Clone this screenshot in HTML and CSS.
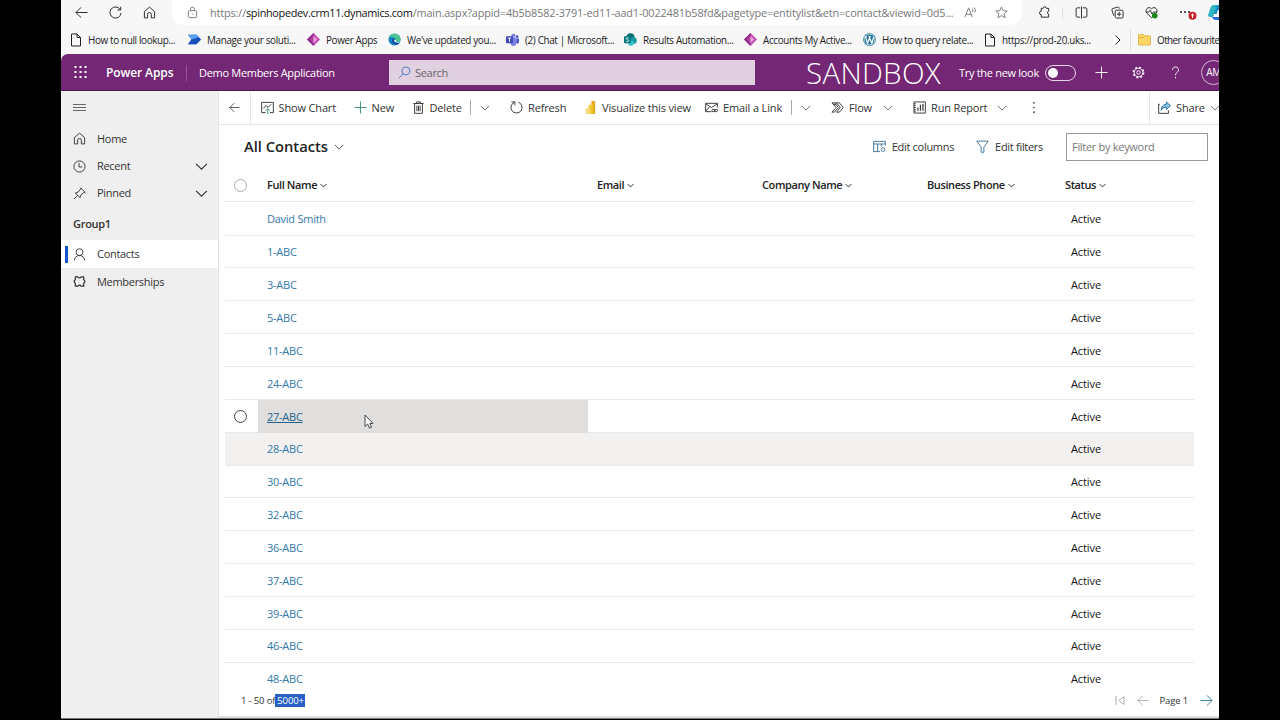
FILE: index.html
```
<!DOCTYPE html>
<html lang="en">
  <head>
    <meta charset="UTF-8" />
    <meta name="viewport" content="width=device-width, initial-scale=1.0" />
    <title>All Contacts - Power Apps</title>
    <link rel="stylesheet" href="styles.css">
  </head>
  <body>
    <!-- Shared icons -->
    <svg class="sprite">
      <symbol id="chevron" viewBox="0 0 12 12"><path d="M1 3.5l5 5 5-5" /></symbol>
      <symbol id="arrow" viewBox="0 0 14 14"><path d="M13.5 7H1M6.5 1.5L1 7l5.5 5.5" /></symbol>
      <symbol id="page" viewBox="0 0 12 14"><path d="M1.5 1h5.5l3.5 3.5V13h-9zM7 1v3.5h3.5" /></symbol>
      <symbol id="home" viewBox="0 0 14 14"><path d="M1.5 6L7 1.2 12.5 6v6.8H9V9a2 2 0 0 0-4 0v3.8H1.5z" /></symbol>
      <symbol id="powerapps" viewBox="0 0 14 14">
        <path d="M7 0l7 7-7 7-7-7z" fill="#c54bb0" />
        <path d="M7 0L0 7l7 7z" fill="#8b2a86" />
        <path d="M7 3l4 4-4 4-3-4z" fill="#e9a3dc" />
        <path d="M7 3L3 7l4 4z" fill="#b5459f" />
      </symbol>
    </svg>

    <div class="window">
      <div class="address-bar">
        <svg class="icon"><use href="#arrow" /></svg>
        <svg class="icon" viewBox="0 0 14 14"><path d="M12.2 4A6 6 0 1 0 13 7.6M12.6.8V4.3H9" /></svg>
        <svg class="icon"><use href="#home" /></svg>
        <div class="address">
          <svg class="icon lock" viewBox="0 0 12 14"><rect x="1.5" y="5" width="9" height="7.5" rx="1.2" /><path d="M3.8 5V3.5a2.2 2.2 0 0 1 4.4 0V5M6 8.3v1" /></svg>
          <span class="url">https://<b>spinhopedev.crm11.dynamics.com</b>/main.aspx?appid=4b5b8582-3791-ed11-aad1-0022481b58fd&amp;pagetype=entitylist&amp;etn=contact&amp;viewid=0d5...</span>
          <svg class="icon read" viewBox="0 0 14 14"><path d="M1 12L5 2l4 10M2.3 9h5.4M9 3q1.5 1.5 0 3.500M11 1.500q2.500 2.500.5 5.500" /></svg>
          <svg class="icon" viewBox="0 0 14 14"><path d="M7 1l1.800 4 4.300.4-3.200 2.900 1 4.300L7 10.400l-3.900 2.200 1-4.300L.9 5.400 5.200 5z" /></svg>
        </div>
        <svg class="icon" viewBox="0 0 14 14"><path d="M5.500 2.500a1.700 1.700 0 0 1 3.400 0h2.600v3a1.700 1.700 0 0 0 0 3.300v3.200H3.500V9.300a1.900 1.900 0 1 1 0-3.800v-3z" /></svg>
        <span class="separator"></span>
        <svg class="icon" viewBox="0 0 14 14"><path d="M5.500 2H2.500A1.300 1.300 0 0 0 1.200 3.300v7.400A1.300 1.300 0 0 0 2.500 12h3M8.500 2h3a1.300 1.300 0 0 1 1.300 1.300v7.400a1.300 1.300 0 0 1-1.300 1.300h-3M7 .5v13" /></svg>
        <svg class="icon" viewBox="0 0 14 14"><rect x="4.500" y="4.500" width="8.500" height="8.500" rx="1.500" /><path d="M8.750 6.500v4.500M6.500 8.750H11M3 10.500L1 4.500A1.500 1.500 0 0 1 2 2.700l5-1.500a1.500 1.500 0 0 1 1.800.8l.3.900" /></svg>
        <svg class="icon" viewBox="0 0 14 14"><path d="M7 12.500L1.800 7.500C-.5 4 3.500-.5 7 3c3.500-3.500 7.500 1 5.200 4.500zM1 6.500h3l1.500-2 2 4 1.500-2h4" /><circle class="ok" cx="10.500" cy="10.500" r="3" /></svg>
        <svg class="icon more" viewBox="0 0 18 14"><circle cx="2" cy="6" r="1" /><circle cx="6" cy="6" r="1" /><circle cx="10" cy="6" r="1" /><circle class="alert" cx="13.500" cy="9.800" r="4" /><path d="M13.500 12V8M12 9.400L13.500 8 15 9.400" /></svg>
        <svg class="copilot" viewBox="0 0 14 18"><path d="M6 1h8v9H4z" fill="#1b8fc4" /><path d="M6 1Q3 1 2 5L0 11q0 2 3 2h2L9 1z" fill="#2fb6c5" /><path d="M4 13h9l-1 3H8q-3 0-4-3z" fill="#2868d8" /><path d="M10 6h4v6H8z" fill="#f7f7f7" /></svg>
      </div>

      <div class="bookmarks">
        <a><svg class="icon page"><use href="#page" /></svg>How to null lookup...</a>
        <a><svg viewBox="0 0 14 14"><path d="M0 2h9l5 5-5 5H0l4-5z" fill="#2f6fdc" /><path d="M7 2h2l5 5-5 5H0z" fill="#1b4fb8" /><path d="M0 2h9l2.500 2.500L4 7z" fill="#58a1f5" /></svg>Manage your soluti...</a>
        <a><svg><use href="#powerapps" /></svg>Power Apps</a>
        <a><svg viewBox="0 0 14 14"><circle cx="7" cy="7" r="6.500" fill="#1685c8" /><path d="M1 5a6.500 6.500 0 0 1 12.500 2c0 3-4 3-5 1.500 1-4-5-5-7.500-3.500z" fill="#4cc68b" /><path d="M6 6c-3 1-2 6 3 6.500 2 0 3-1 3.500-2C9 11 5.500 9.500 7 6.500z" fill="#0f4a91" /><path d="M6.700 7.300c-.8 2 2 3.700 5.300 2.800l.8-.7C10 10 7.500 9 8.500 7.500z" fill="#fff" /></svg>We've updated you...</a>
        <a><svg viewBox="0 0 14 14"><circle cx="8" cy="3" r="2.300" fill="#7b83eb" /><circle cx="12" cy="4" r="1.500" fill="#5059c9" /><path d="M5 5.500h6v5a3 3 0 0 1-6 1z" fill="#7b83eb" /><path d="M11 6h3v4a2 2 0 0 1-3 1z" fill="#5059c9" /><rect y="3.500" width="7.500" height="7.500" rx=".8" fill="#4049b3" /><path d="M2 5.500h3.600M3.800 5.500v4" stroke="#fff" /></svg>(2) Chat | Microsoft...</a>
        <a><svg viewBox="0 0 14 14"><circle cx="7" cy="4.500" r="4.300" fill="#036c70" /><circle cx="10" cy="8" r="3.800" fill="#1a9ba1" /><circle cx="7.500" cy="11" r="2.800" fill="#37c6d0" /><rect y="3.500" width="7.500" height="7.500" rx=".8" fill="#03787c" /><path d="M5 5.500c-3-1-3.200 1.200-1.200 1.700S5.500 9.800 2.500 9" fill="none" stroke="#fff" /></svg>Results Automation...</a>
        <a><svg><use href="#powerapps" /></svg>Accounts My Active...</a>
        <a><svg viewBox="0 0 14 14"><circle cx="7" cy="7" r="6.800" fill="#21759b" /><circle cx="7" cy="7" r="5.700" fill="none" stroke="#d8e7ee" stroke-width=".8" /><path d="M2.500 4l2.600 7L7 5l2.500 6 2-6.500M2 4h2M6 4h2.500" fill="none" stroke="#fff" stroke-width="1.300" /></svg>How to query relate...</a>
        <a><svg class="icon page"><use href="#page" /></svg>https://prod-20.uks...</a>
        <svg class="icon next" viewBox="0 0 8 12"><path d="M1.500 1.500L6 6l-4.500 4.500" /></svg>
        <a class="folder"><svg viewBox="0 0 14 14"><path d="M.5 2.500q0-1 1-1h4l1.500 1.500h5.500q1 0 1 1v8q0 1-1 1h-11q-1 0-1-1z" fill="#ffd767" stroke="#d8a432" stroke-width=".8" /><path d="M.5 5h5L7 3.500" fill="none" stroke="#d8a432" stroke-width=".8" /></svg>Other favourite</a>
      </div>

      <header class="app-header">
        <svg class="waffle" viewBox="0 0 13 13"><path d="M1.500 0v13M6.500 0v13M11.500 0v13" /></svg>
        <span class="brand">Power Apps</span>
        <span class="app-name">Demo Members Application</span>
        <div class="search"><svg class="icon" viewBox="0 0 14 14"><circle cx="8.500" cy="5.300" r="4.300" /><path d="M5.500 8.500L1 13" /></svg>Search</div>
        <span class="sandbox">SANDBOX</span>
        <span class="new-look">Try the new look</span>
        <span class="toggle"></span>
        <svg class="icon" viewBox="0 0 14 14"><path d="M7 .5v13M.5 7h13" /></svg>
        <svg class="icon gear" viewBox="0 0 14 14"><circle cx="7" cy="7" r="4.600" /><circle cx="7" cy="7" r="1.900" /><circle class="teeth" cx="7" cy="7" r="5.600" /></svg>
        <svg class="icon help" viewBox="0 0 14 14"><path d="M3.800 4.200a3.200 3.200 0 1 1 5 2.600Q7 8 7 10M7 11.800v1.400" /></svg>
        <span class="avatar">AM</span>
      </header>

      <div class="workspace">
        <nav class="sidebar">
          <svg class="icon menu" viewBox="0 0 13 13"><path d="M0 3.500h13M0 6.500h13M0 9.500h13" /></svg>
          <a><svg class="icon"><use href="#home" /></svg>Home</a>
          <a><svg class="icon" viewBox="0 0 14 14"><circle cx="7" cy="7" r="6" /><path d="M6.500 3v4.500H10" /></svg>Recent<svg class="icon expand"><use href="#chevron" /></svg></a>
          <a><svg class="icon" viewBox="0 0 14 14"><path d="M1 13l4-4M2.500 6.500l5 5 1-3 3-2.500 1.500-.3L8.300 1 8 2.500 5.500 5.500z" /></svg>Pinned<svg class="icon expand"><use href="#chevron" /></svg></a>
          <h2>Group1</h2>
          <a class="selected"><svg class="icon" viewBox="0 0 14 14"><circle cx="7" cy="4.500" r="3.700" /><path d="M1.500 13.500a5.500 5.500 0 0 1 11 0" /></svg>Contacts</a>
          <a><svg class="icon bold" viewBox="0 0 14 14"><path d="M2.500 2h2.700q1.800 2.400 3.600 0h2.700v3.200q2.600 1.800 0 3.600V12H8.800Q7 9.600 5.200 12H2.500V8.800q-2.600-1.800 0-3.600z" /></svg>Memberships</a>
        </nav>

        <main>
          <div class="commands">
            <span class="back"><svg class="icon"><use href="#arrow" /></svg></span>
            <span><svg class="icon" viewBox="0 0 14 14"><path d="M5 12.500H.7V1.500h12.600v11H9.500M2.500 8l3-3 2 2L11 3.500" /><path class="green" d="M7.300 14V8.500M5 10.500l2.300-2.300 2.300 2.300" /></svg>Show Chart</span>
            <span><svg class="icon green" viewBox="0 0 14 14"><path d="M7 .5v13M.5 7h13" /></svg>New</span>
            <span><svg class="icon trash" viewBox="0 0 14 14"><path d="M1.500 2.700h11M5 2.700V1h4v1.700M2.800 2.700v10.600h8.400V2.700M5.300 5v6M7 5v6M8.700 5v6" /></svg>Delete</span>
            <span class="split"><svg class="icon chevron"><use href="#chevron" /></svg></span>
            <span><svg class="icon" viewBox="0 0 14 14"><path d="M5 1.300a6 6 0 1 0 4 0M1.500 1h3.700v3.500" /></svg>Refresh</span>
            <span><svg viewBox="0 0 14 14"><path d="M8 0h4v14H8z" fill="#e3aa18" /><path d="M5 4h4.500v10H5z" fill="#f2c737" /><path d="M2 8h4.500v6H2z" fill="#f5d976" /></svg>Visualize this view</span>
            <span><svg class="icon" viewBox="0 0 14 14"><path d="M7 11.500H.7v-9h12.600V7M.7 3l6.300 4 6.300-4M.7 11L5 6" /><rect x="7.500" y="9" width="3.500" height="2.500" rx="1.200" /><rect x="10.500" y="9" width="3" height="2.500" rx="1.200" /></svg>Email a Link</span>
            <span class="split"><svg class="icon chevron"><use href="#chevron" /></svg></span>
            <span><svg class="icon" viewBox="0 0 14 14"><path d="M1 2h8l4.300 5L9 12H6l4-5-4-5M1 2l4.500 5L1 12h2.500L8 7 3.800 2M2.500 4h3" /></svg>Flow</span>
            <svg class="icon chevron"><use href="#chevron" /></svg>
            <span><svg class="icon" viewBox="0 0 14 14"><path d="M3.500 1h9.800v12H1V1h2.500M1 3h2M1 5h2M1 7h2M1 9h2M1 11h2" /><path class="bold" d="M5.300 10.500V7M8 10.500V4M10.700 10.500V3" /></svg>Run Report</span>
            <svg class="icon chevron"><use href="#chevron" /></svg>
            <svg class="dots" viewBox="0 0 4 14"><circle cx="2" cy="2" r=".9" /><circle cx="2" cy="7" r=".9" /><circle cx="2" cy="12" r=".9" /></svg>
            <span class="share"><svg class="icon" viewBox="0 0 14 14"><path d="M2 3.500H.7v9.800h10.500V10" /><path d="M9 1l4.500 4L9 9V6.500Q5 6.300 3.500 10q0-6 5.500-6.500z" fill="#8ac3e8" stroke="#276fa5" /></svg>Share</span>
            <svg class="icon chevron"><use href="#chevron" /></svg>
          </div>

          <div class="view-bar">
            <h1>All Contacts</h1>
            <svg class="icon title-chevron"><use href="#chevron" /></svg>
            <span class="columns"><svg class="icon blue" viewBox="0 0 14 14"><path d="M7.500 12.500H.7v-11h12.600V6M.7 4.300h12.600M5 4.300v8.200M9 4.300V7" /><circle cx="10.800" cy="10.300" r="2" /></svg>Edit columns</span>
            <span><svg class="icon blue" viewBox="0 0 14 14"><path d="M.8 1.200h12.400L8.500 7.500v5.700h-3V7.500z" /></svg>Edit filters</span>
            <input class="filter" type="text" placeholder="Filter by keyword">
          </div>

          <div class="grid">
            <div class="row head">
              <i class="radio"></i>
              <span>Full Name<svg class="icon"><use href="#chevron" /></svg></span>
              <span>Email<svg class="icon"><use href="#chevron" /></svg></span>
              <span>Company Name<svg class="icon"><use href="#chevron" /></svg></span>
              <span>Business Phone<svg class="icon"><use href="#chevron" /></svg></span>
              <span>Status<svg class="icon"><use href="#chevron" /></svg></span>
            </div>
            <div class="row first"><a>David Smith</a><span class="status">Active</span></div>
            <div class="row"><a>1-ABC</a><span class="status">Active</span></div>
            <div class="row"><a>3-ABC</a><span class="status">Active</span></div>
            <div class="row"><a>5-ABC</a><span class="status">Active</span></div>
            <div class="row"><a>11-ABC</a><span class="status">Active</span></div>
            <div class="row"><a>24-ABC</a><span class="status">Active</span></div>
            <div class="row current">
              <i class="radio"></i><a>27-ABC</a><span class="status">Active</span>
              <svg class="cursor" viewBox="0 0 10 15"><path d="M1 1v11.500l2.700-2.400 1.800 4 2-.9-1.700-3.800H9z" /></svg>
            </div>
            <div class="row shaded"><a>28-ABC</a><span class="status">Active</span></div>
            <div class="row"><a>30-ABC</a><span class="status">Active</span></div>
            <div class="row"><a>32-ABC</a><span class="status">Active</span></div>
            <div class="row"><a>36-ABC</a><span class="status">Active</span></div>
            <div class="row"><a>37-ABC</a><span class="status">Active</span></div>
            <div class="row"><a>39-ABC</a><span class="status">Active</span></div>
            <div class="row"><a>46-ABC</a><span class="status">Active</span></div>
            <div class="row"><a>48-ABC</a><span class="status">Active</span></div>
          </div>

          <footer>
            <span class="count">1 - 50 of<mark>5000+</mark></span>
            <svg class="icon muted" viewBox="0 0 12 12"><path d="M2 1.500v9M10 2v8L5 6z" /></svg>
            <svg class="icon muted"><use href="#arrow" /></svg>
            <span class="page-number">Page 1</span>
            <svg class="icon forward"><use href="#arrow" /></svg>
          </footer>
        </main>
      </div>
    </div>
  </body>
</html>
```
FILE: styles.css
```
* {
  box-sizing: border-box;
}

body {
  margin: 0;
  height: 720px;
  padding: 0 61px;
  overflow: hidden;
  background: #000;
  color: #333;
  font: 11px/16px "Open Sans", "Noto Sans", sans-serif;
  letter-spacing: -0.3px;
  white-space: nowrap;
}

svg {
  display: block;
  flex: none;
  width: 13px;
  height: 13px;
}

.sprite {
  display: none;
}

.icon {
  fill: none;
  stroke: currentColor;
  stroke-width: 1;
}

.bold {
  stroke-width: 1.3;
}

.window {
  display: flex;
  flex-direction: column;
  width: 1158px;
  height: 719px;
  overflow: hidden;
  background: #f7f7f7;
  border-bottom: 1px solid #777;
}

/* Browser chrome */
.address-bar {
  display: grid;
  grid-template-columns: 34px 34px 38px 857px 24px 13px 36px 34px 34px 29px 20px;
  align-items: center;
  height: 25px;
  padding-left: 14px;
  color: #222;
}

.address {
  display: flex;
  align-items: center;
  width: 850px;
  height: 25px;
  margin-left: -9px;
  padding-left: 14px;
  background: #fff;
  border-radius: 0 0 12px 12px;
}

.address .icon {
  color: #777;
}

.url {
  width: 743px;
  margin: 0 11px;
  color: #777;
  font-size: 10.9px;
  letter-spacing: -0.145px;
}

.url b {
  color: #111;
  font-weight: 400;
  letter-spacing: -0.32px;
}

.address .read {
  margin-right: 18px;
}

.separator {
  width: 1px;
  height: 12px;
  background: #ddd;
}

.address-bar .ok {
  fill: #16831b;
  stroke: none;
}

.address-bar .more {
  width: 18px;
  height: 14px;
}

.more circle {
  fill: #222;
  stroke: none;
}

.more .alert {
  fill: #c9252d;
}

.more path {
  stroke: #fff;
}

.copilot {
  width: 14px;
  height: 18px;
}

.bookmarks {
  display: grid;
  grid-template-columns: 118px 119px 81px 118px 118px 120px 119px 121px 130px 16px 90px;
  align-items: center;
  height: 29px;
  padding-left: 9px;
  color: #222;
  font-size: 9.9px;
  letter-spacing: -0.35px;
}

.bookmarks a {
  display: flex;
  align-items: center;
  gap: 6px;
}

.bookmarks .page {
  width: 12px;
  height: 14px;
}

.bookmarks .next {
  width: 8px;
  height: 12px;
}

.bookmarks .folder {
  height: 20px;
  padding-left: 7px;
  border-left: 1px solid #ddd;
  letter-spacing: -0.55px;
}

/* Purple app header */
.app-header {
  display: flex;
  align-items: center;
  height: 37px;
  padding: 1px 0 0 13px;
  background: #742774;
  border-bottom: 1px solid #4b164b;
  border-radius: 7px 0 0 0;
  color: #fff;
}

.app-header > * {
  flex: none;
}

.waffle {
  fill: none;
  stroke: #fff;
  stroke-width: 2;
  stroke-dasharray: 2 3;
}

.brand {
  width: 81px;
  margin-left: 19px;
  border-right: 1px solid #935793;
  font-size: 12px;
  font-weight: 600;
  letter-spacing: -0.1px;
}

.app-name {
  width: 202px;
  padding-left: 12px;
}

.search {
  display: flex;
  align-items: center;
  gap: 4px;
  width: 366px;
  height: 25px;
  padding-left: 9px;
  background: #e0d0e0;
  color: #666;
}

.search .icon {
  color: #4878c8;
}

.sandbox {
  width: 153px;
  margin-left: 51px;
  font-size: 29.5px;
  font-weight: 300;
  line-height: 35px;
  letter-spacing: 0.3px;
}

.new-look {
  width: 86px;
}

.toggle {
  display: flex;
  align-items: center;
  width: 31px;
  height: 16px;
  margin-right: 19px;
  padding-left: 2px;
  border: 1px solid #e5d5e5;
  border-radius: 8px;
}

.toggle::before {
  content: "";
  width: 10px;
  height: 10px;
  background: #fff;
  border-radius: 50%;
}

.gear {
  margin-left: 24px;
}

.gear .teeth {
  stroke-width: 1.5;
  stroke-dasharray: 2.2 2.2;
}

.help {
  margin: 0 19px 0 24px;
}

.avatar {
  width: 25px;
  height: 25px;
  border: 1px solid #d5b8d5;
  border-radius: 50%;
  font-size: 10px;
  line-height: 23px;
  text-align: center;
}

.workspace {
  display: flex;
  flex: 1;
  min-height: 0;
}

/* Left navigation */
.sidebar {
  width: 158px;
  padding-top: 10px;
  background: #efefef;
  border-right: 1px solid #e2e2e2;
}

.sidebar .menu {
  margin: 0 0 11px 12px;
  color: #666;
}

.sidebar a {
  display: flex;
  align-items: center;
  gap: 11px;
  height: 27.4px;
  padding-left: 12px;
}

.sidebar .expand {
  margin: 0 10px 0 auto;
}

.sidebar h2 {
  margin: 9px 0 9px 12px;
  font-size: 11px;
  font-weight: 600;
  line-height: 15px;
}

.sidebar .selected {
  position: relative;
  height: 28px;
  background: #fff;
}

.selected::before {
  content: "";
  position: absolute;
  left: 4px;
  width: 3px;
  height: 17px;
  background: #1155cc;
}

/* Content area */
main {
  display: flex;
  flex: 1;
  flex-direction: column;
  min-width: 0;
  background: #fff;
}

.commands {
  display: grid;
  grid-template-columns: 41.5px 93px 59px 57.5px 40px 74px 121px 86px 40px 52px 30px 84px 35px 117px 61px 14px;
  align-items: center;
  height: 34px;
  border-bottom: 1px solid #e6e6e6;
  letter-spacing: -0.15px;
}

.commands span {
  display: flex;
  align-items: center;
  gap: 5px;
}

.commands .back {
  width: 32px;
  height: 33px;
  padding-left: 10px;
  border-right: 1px solid #e6e6e6;
}

.back .icon {
  width: 11px;
  height: 11px;
}

.trash {
  margin-left: -1px;
}

.green {
  stroke: #3c8c6c;
}

.commands .split {
  height: 15px;
  padding-left: 9px;
  border-left: 1px solid #aaa;
}

.chevron {
  width: 10px;
  height: 10px;
  color: #555;
}

.commands .dots {
  width: 4px;
  fill: #333;
}

.commands .share {
  height: 33px;
  padding-left: 8px;
  border-left: 1px solid #e6e6e6;
}

.view-bar {
  display: flex;
  align-items: center;
  height: 43px;
  padding-left: 25px;
}

.view-bar h1 {
  margin: 0;
  padding-bottom: 2px;
  color: #222;
  font-size: 14.7px;
  font-weight: 600;
  letter-spacing: 0;
}

.title-chevron {
  width: 10px;
  height: 10px;
  margin-left: 6px;
}

.view-bar span {
  display: flex;
  gap: 6px;
  align-items: center;
}

.view-bar .columns {
  margin: 0 22px 0 auto;
}

.blue {
  stroke: #3b7099;
}

.filter {
  width: 142px;
  height: 28px;
  margin: 0 11px 0 23px;
  padding: 0 5px;
  border: 1px solid #999;
  font: inherit;
  letter-spacing: inherit;
}

.filter::placeholder {
  color: #777;
}

/* Contact list */
.grid {
  height: 522px;
  padding-left: 6px;
  overflow: hidden;
}

.row {
  position: relative;
  display: grid;
  grid-template-columns: 33px 330px 165px 165px 138px 138px;
  align-items: center;
  width: 969px;
  height: 32.86px;
  padding-top: 1.4px;
  border-bottom: 1px solid #e9e9e9;
  color: #111;
}

.row a {
  grid-column: 2;
  padding-left: 9px;
  color: #337aa9;
  letter-spacing: -0.25px;
}

.status {
  grid-column: 6;
  padding-left: 15px;
  letter-spacing: -0.1px;
}

.head {
  height: 34px;
  color: #222;
  font-weight: 600;
}

.first {
  height: 33.5px;
}

.head span {
  display: flex;
  align-items: center;
  gap: 3px;
  padding-left: 9px;
  letter-spacing: -0.4px;
}

.head .icon {
  width: 7px;
  height: 7px;
  stroke-width: 1.6;
}

.radio {
  width: 13px;
  height: 13px;
  margin-left: 9px;
  border: 1px solid #aaa;
  border-radius: 50%;
}

.current {
  padding-top: 0;
}

.current .radio {
  border-color: #444;
}

.current a {
  height: 100%;
  background: #e0dfde;
  color: #225f8c;
  line-height: 33px;
  text-decoration: underline;
}

.current .status {
  padding-top: 1px;
}

.shaded {
  background: #f3f1f0;
}

.cursor {
  position: absolute;
  left: 139px;
  top: 14px;
  width: 10px;
  height: 15px;
  fill: #fff;
  stroke: #444;
}

footer {
  display: flex;
  flex: 1;
  align-items: center;
  padding: 0 0 5px 22px;
  border-bottom: 2px solid #e0e0e0;
  font-size: 9.5px;
  letter-spacing: -0.15px;
}

.count {
  margin-right: auto;
}

mark {
  padding: 0 1px 0 2px;
  background: #2860c5;
  color: #fff;
}

.muted {
  width: 12px;
  margin-right: 11px;
  color: #aaa;
}

.forward {
  margin: 0 6px 0 12px;
  color: #2c7d9f;
  transform: scaleX(-1);
}
```
